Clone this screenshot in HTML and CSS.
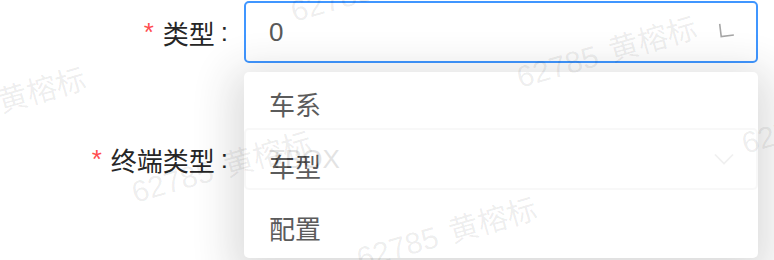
FILE: index.html
```html
<!DOCTYPE html>
<html lang="zh-CN">
<head>
<meta charset="utf-8">
<title>表单</title>
<link rel="stylesheet" href="styles.css">
</head>
<body>
<form class="form">
  <div class="item">
    <label class="label"><span class="req">*</span><span>类型</span><span class="colon">:</span></label>
    <div class="select focused">
      <span class="value">0</span>
      <svg class="arrow open" width="20" height="20" viewBox="0 0 20 20"><polyline points="1,5.5 10,14.5 19,5.5" fill="none" stroke="#a6a6a6" stroke-width="1.6"/></svg>
    </div>
  </div>
  <div class="item">
    <label class="label"><span class="req">*</span><span>终端类型</span><span class="colon">:</span></label>
    <div class="select">
      <span class="value">TBOX</span>
      <svg class="arrow" width="20" height="20" viewBox="0 0 20 20"><polyline points="1,5.5 10,14.5 19,5.5" fill="none" stroke="#a6a6a6" stroke-width="1.6"/></svg>
    </div>
  </div>
</form>
<ul class="dropdown">
  <li class="option">车系</li>
  <li class="option">车型</li>
  <li class="option">配置</li>
</ul>
<div class="watermarks">
  <span class="wm" style="left:-5px;top:101px">62785 黄榕标</span>
  <span class="wm" style="left:221px;top:165px">62785 黄榕标</span>
  <span class="wm" style="left:446px;top:231px">62785 黄榕标</span>
  <span class="wm" style="left:380px;top:-16px">62785 黄榕标</span>
  <span class="wm" style="left:606px;top:50px">62785 黄榕标</span>
  <span class="wm" style="left:831px;top:116px">62785 黄榕标</span>
</div>
</body>
</html>
```
FILE: styles.css
```css
* { box-sizing: border-box; }
html, body { margin: 0; padding: 0; background: #fff; }
body {
  position: relative;
  width: 774px;
  height: 260px;
  overflow: hidden;
  font-family: "Liberation Sans", "Noto Sans CJK SC", sans-serif;
  font-size: 26px;
}
.form {
  padding-top: 1px;
  display: flex;
  flex-direction: column;
  gap: 65px;
}
.item {
  display: grid;
  grid-template-columns: 244px 514px;
  align-items: center;
}
.label {
  display: flex;
  justify-content: flex-end;
  align-items: center;
  padding-right: 16px;
  color: #262626;
}
.req { color: #ff4d4f; margin-right: 9px; }
.colon { margin-left: 6px; }
.select {
  height: 62px;
  border: 2px solid #d9d9d9;
  border-radius: 5px;
  background: #fff;
  display: flex;
  align-items: center;
  justify-content: space-between;
  padding: 0 22px 0 23px;
}
.select.focused { border-color: #4096ff; }
.value { color: #595959; }
.arrow { display: block; }
.arrow.open { transform: rotate(38deg); margin-top: 2px; }
.dropdown {
  position: absolute;
  left: 244px;
  top: 72px;
  width: 514px;
  height: 186px;
  margin: 0;
  padding: 0;
  list-style: none;
  background: #fff;
  border-radius: 5px;
  box-shadow: 0 10px 40px 12px rgba(0, 0, 0, 0.16);
  opacity: 0.83;
}
.option {
  height: 62px;
  display: flex;
  align-items: center;
  padding-left: 25px;
  color: #3a3a3a;
}
.watermarks {
  position: absolute;
  inset: 0;
  pointer-events: none;
}
.wm {
  position: absolute;
  white-space: nowrap;
  font-size: 30px;
  word-spacing: 4px;
  color: rgba(0, 0, 0, 0.075);
  transform: translate(-50%, -50%) rotate(-16deg);
}
```
